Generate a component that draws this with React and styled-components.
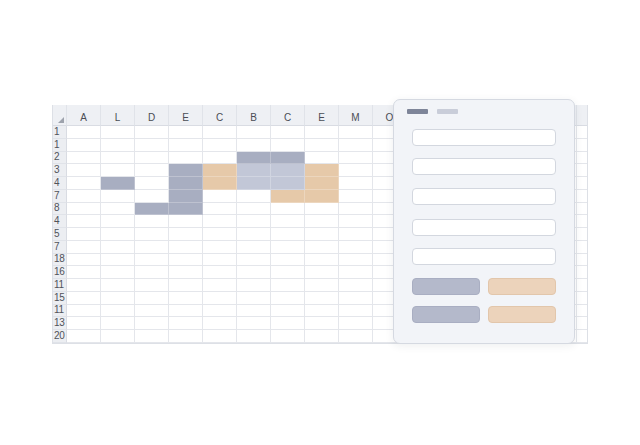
import React from "react";
import styled, { createGlobalStyle } from "styled-components";

const Global = createGlobalStyle`
  html, body { margin: 0; padding: 0; background: #ffffff; }
  body { font-family: "Liberation Sans", Arial, sans-serif; }
`;

const Page = styled.div`
  position: relative;
  width: 640px;
  height: 445px;
  padding: 105px 0 0 52px;
  box-sizing: border-box;
`;

const Sheet = styled.div`
  width: 536px;
  overflow: hidden;
  border: 1px solid #dde0e6;
  border-top: none;
  box-sizing: border-box;
  background: #fff;
`;

const Grid = styled.div`
  display: grid;
  grid-template-columns: 14px repeat(16, 34px);
  grid-template-rows: 21px repeat(17, 12.76px);
  width: max-content;
`;

const Cell = styled.div`
  box-sizing: border-box;
  border-right: 1px solid ${(p) => (p.$fill ? "rgba(255,255,255,0.25)" : "#e4e6eb")};
  border-bottom: 1px solid ${(p) => (p.$fill ? "rgba(255,255,255,0.25)" : "#e4e6eb")};
  background: ${(p) => p.$fill || "#ffffff"};
`;

const HeadCell = styled.div`
  box-sizing: border-box;
  background: #eef0f4;
  border-right: 1px solid #e0e3e9;
  border-bottom: 1px solid #d9dce3;
  color: #4a4d55;
  font-size: 10px;
  display: flex;
  align-items: center;
  justify-content: center;
  padding-top: 4px;
`;

const Corner = styled(HeadCell)`
  position: relative;
  &::after {
    content: "";
    position: absolute;
    right: 2px;
    bottom: 2px;
    width: 0;
    height: 0;
    border-left: 6px solid transparent;
    border-bottom: 6px solid #9ea3ad;
  }
`;

const RowNum = styled.div`
  box-sizing: border-box;
  background: #eceef2;
  border-right: 1px solid #d9dce3;
  border-bottom: 1px solid #e0e3e9;
  color: #50535a;
  font-size: 10px;
  line-height: 12px;
  padding-left: 1px;
  display: flex;
  align-items: center;
  letter-spacing: -0.3px;
`;

const Panel = styled.div`
  position: absolute;
  left: 393px;
  top: 99px;
  width: 182px;
  height: 245px;
  box-sizing: border-box;
  background: #f2f4f8;
  border: 1px solid #d5d9e1;
  border-radius: 7px;
  box-shadow: 0 2px 8px rgba(40, 50, 70, 0.08);
  padding: 9px 18px 0 18px;
  display: flex;
  flex-direction: column;
`;

const Tabs = styled.div`
  display: flex;
  gap: 9px;
  margin-left: -5px;
  margin-bottom: 15px;
`;

const Tab = styled.div`
  width: 21px;
  height: 5px;
  border-radius: 1px;
  background: ${(p) => (p.$active ? "#7e8599" : "#c9cdd9")};
`;

const Input = styled.div`
  height: 17px;
  box-sizing: border-box;
  background: #ffffff;
  border: 1px solid #d3d7df;
  border-radius: 4px;
  margin-bottom: ${(p) => p.$gap}px;
`;

const ButtonRow = styled.div`
  display: grid;
  grid-template-columns: 68px 68px;
  justify-content: space-between;
  margin-bottom: 11px;
`;

const Btn = styled.div`
  height: 17px;
  border-radius: 4px;
  background: ${(p) => (p.$tone === "tan" ? "#ecd3bb" : "#b4b9cb")};
  border: 1px solid ${(p) => (p.$tone === "tan" ? "#e2c6ab" : "#a9aec2")};
  box-sizing: border-box;
`;

const cols = ["A", "L", "D", "E", "C", "B", "C", "E", "M", "O", "", "", "", "", "", ""];
const rows = ["1", "1", "2", "3", "4", "7", "8", "4", "5", "7", "18", "16", "11", "15", "11", "13", "20"];

const SLATE = "#a8aec1";
const LIGHT = "#c2c7d7";
const TAN = "#e6c9a9";

const fills = {
  "2,5": SLATE, "2,6": SLATE,
  "3,3": SLATE, "3,4": TAN, "3,5": LIGHT, "3,6": LIGHT, "3,7": TAN,
  "4,1": SLATE, "4,3": SLATE, "4,4": TAN, "4,5": LIGHT, "4,6": LIGHT, "4,7": TAN,
  "5,3": SLATE, "5,6": TAN, "5,7": TAN,
  "6,2": SLATE, "6,3": SLATE,
};

export default function App() {
  return (
    <>
      <Global />
      <Page>
        <Sheet>
          <Grid>
            <Corner />
            {cols.map((c, i) => (
              <HeadCell key={"h" + i}>{c}</HeadCell>
            ))}
            {rows.map((r, ri) => (
              <React.Fragment key={"r" + ri}>
                <RowNum>{r}</RowNum>
                {cols.map((_, ci) => (
                  <Cell key={ci} $fill={fills[`${ri},${ci}`]} />
                ))}
              </React.Fragment>
            ))}
          </Grid>
        </Sheet>
        <Panel>
          <Tabs>
            <Tab $active />
            <Tab />
          </Tabs>
          <Input $gap={12} />
          <Input $gap={13} />
          <Input $gap={14} />
          <Input $gap={12} />
          <Input $gap={13} />
          <ButtonRow>
            <Btn />
            <Btn $tone="tan" />
          </ButtonRow>
          <ButtonRow>
            <Btn />
            <Btn $tone="tan" />
          </ButtonRow>
        </Panel>
      </Page>
    </>
  );
}
